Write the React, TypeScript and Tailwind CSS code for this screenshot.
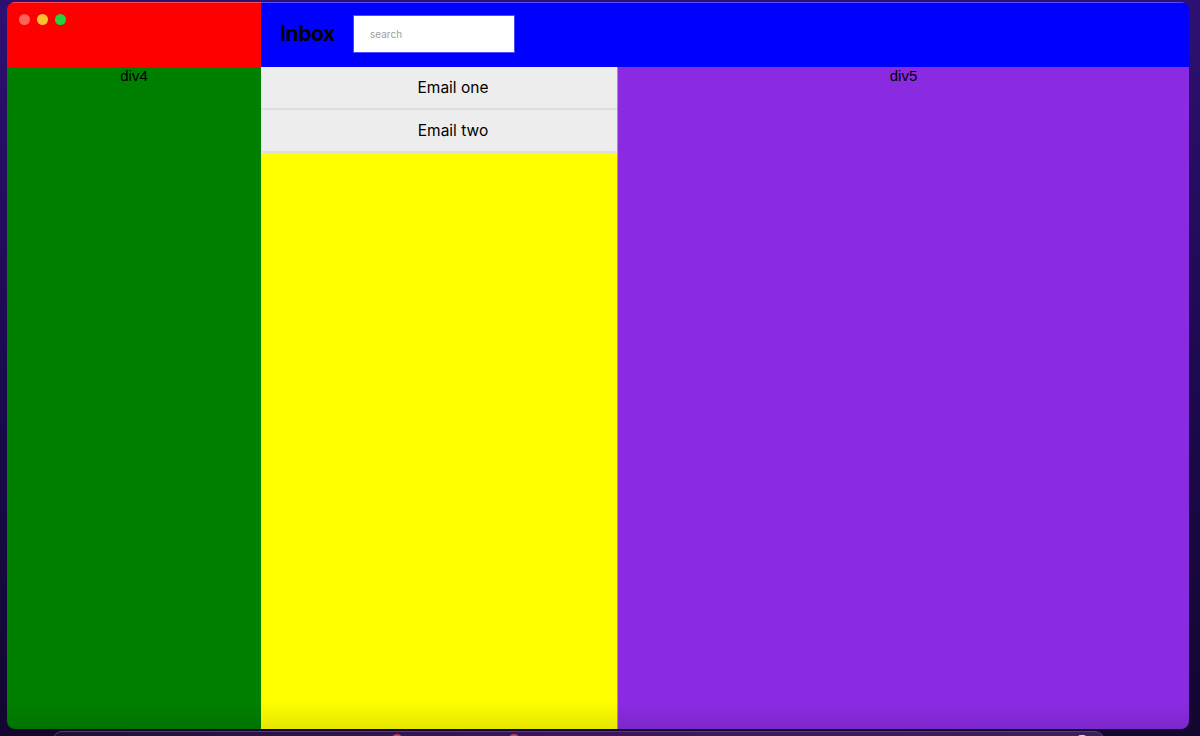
import React from 'react';

const emails = ['Email one', 'Email two'];

export default function App() {
  return (
    <div className="relative w-[1200px] h-[736px] overflow-hidden bg-gradient-to-b from-[#2e1072] via-[#1c0a50] to-[#13062f] pt-[2px] pl-[7px] font-['Liberation_Sans',sans-serif] text-black">
      {/* window */}
      <div className="relative z-10 grid w-[1182px] h-[727px] grid-cols-[254px_356px_572px] grid-rows-[65px_1fr] overflow-hidden rounded-[8px]">
        {/* traffic lights */}
        <div className="flex items-start gap-[7px] bg-[#ff0000] pl-[12px] pt-[12px]">
          <span className="h-[11px] w-[11px] rounded-full bg-[#ff6259]" />
          <span className="h-[11px] w-[11px] rounded-full bg-[#ffc12f]" />
          <span className="h-[11px] w-[11px] rounded-full bg-[#27cf41]" />
        </div>

        {/* header */}
        <div className="col-span-2 flex items-start bg-[#0000ff] pl-[19px] pt-[13px]">
          <h1 className="m-0 mt-[8px] w-[73px] font-['Inter',sans-serif] text-[21px] font-bold leading-[21px] tracking-[-0.4px]">Inbox</h1>
          <input
            placeholder="search"
            readOnly
            className="h-[38px] w-[162px] border border-[#4a4aff] bg-white pl-[16px] font-['Inter',sans-serif] text-[10px] outline-none placeholder:text-[#a0a0a0]"
          />
        </div>

        <div className="bg-[#008000] text-center text-[15px] leading-[18px]">div4</div>

        {/* email list */}
        <div className="flex flex-col bg-[#ffff00]">
          {emails.map((email) => (
            <div
              key={email}
              className="flex h-[43px] items-center justify-center border-b-2 border-[#dedede] bg-[#ededed] pl-[28px] font-['Inter',sans-serif] text-[15.5px]"
            >
              {email}
            </div>
          ))}
        </div>

        <div className="border-l border-[#b9a21e] bg-[#8a2be2] text-center text-[15px] leading-[18px]">div5</div>

        {/* highlight along the top edge of the window */}
        <div className="pointer-events-none absolute inset-x-0 top-0 h-px bg-white/30" />
        {/* shadow falling on the window from the dock */}
        <div className="pointer-events-none absolute inset-x-0 bottom-0 h-[28px] bg-gradient-to-b from-transparent to-black/10" />
      </div>

      {/* dock peeking out under the window */}
      <div className="absolute bottom-[-20px] left-[52px] flex h-[25px] w-[1053px] rounded-t-[10px] border border-[#4a4468] bg-gradient-to-r from-[#1f1038] via-[#3c1560] to-[#3a1f5c]">
        <span className="absolute left-[338px] top-[2px] h-[12px] w-[12px] rounded-full bg-[#d8423f]" />
        <span className="absolute left-[455px] top-[2px] h-[12px] w-[12px] rounded-full bg-[#d8423f]" />
        <span className="absolute left-[1024px] top-[3px] h-[8px] w-[10px] rounded-full bg-[#d8d8e0]" />
      </div>
    </div>
  );
}
